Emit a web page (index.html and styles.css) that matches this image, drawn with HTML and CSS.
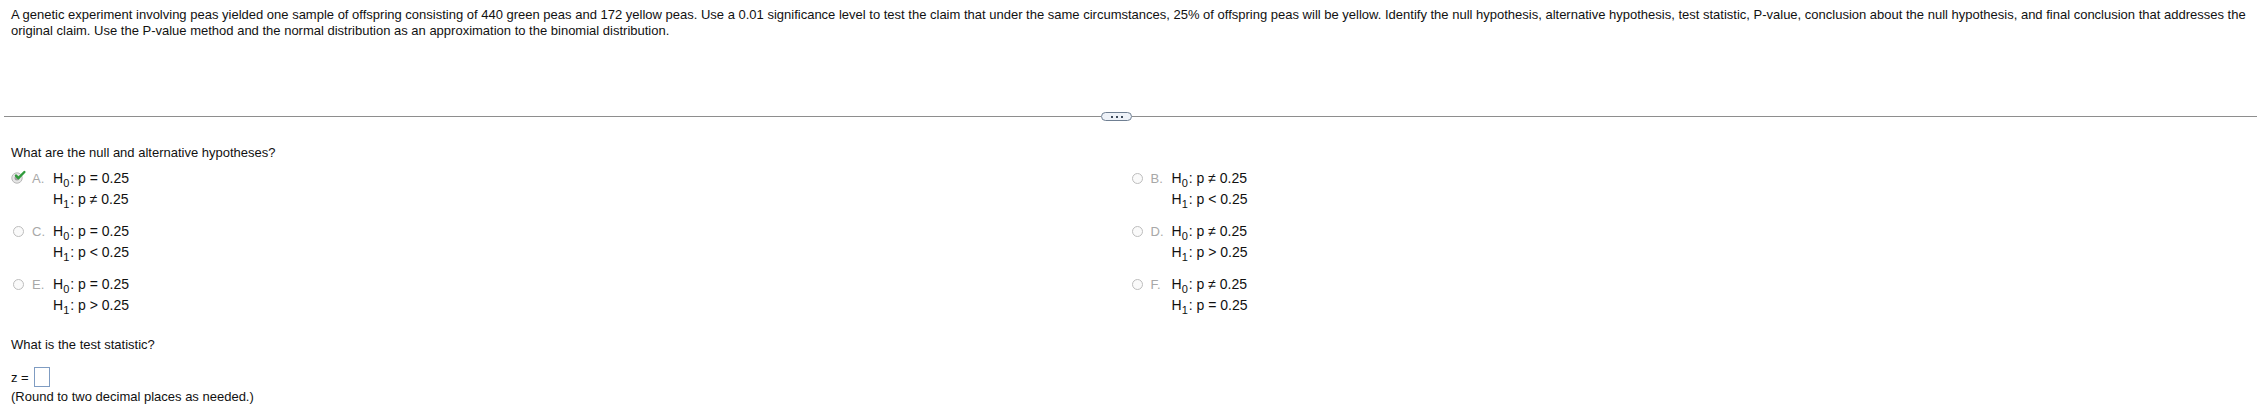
FILE: index.html
```html
<!DOCTYPE html>
<html>
<head>
<meta charset="utf-8">
<link rel="stylesheet" href="styles.css">
</head>
<body>
<div class="page">
  <p class="question">A genetic experiment involving peas yielded one sample of offspring consisting of 440 green peas and 172 yellow peas. Use a 0.01 significance level to test the claim that under the same circumstances, 25% of offspring peas will be yellow. Identify the null hypothesis, alternative hypothesis, test statistic, P-value, conclusion about the null hypothesis, and final conclusion that addresses the original claim. Use the P-value method and the normal distribution as an approximation to the binomial distribution.</p>

  <div class="divider">
    <span class="rule"></span>
    <span class="more"><i></i><i></i><i></i></span>
    <span class="rule"></span>
  </div>

  <p class="prompt">What are the null and alternative hypotheses?</p>

  <div class="options">
    <div class="option">
      <span class="radio checked">
        <svg width="17" height="14" viewBox="0 0 17 14">
          <circle cx="6" cy="8" r="5.2" fill="#e6e6e6" stroke="#b8b8b8" stroke-width="1"/>
          <circle cx="6" cy="8" r="2.5" fill="#a0a0a0"/>
          <path d="M5 5.6 L7.4 8.2 L13.4 2" fill="none" stroke="#2f9b3b" stroke-width="2.4" stroke-linecap="round" stroke-linejoin="round"/>
        </svg>
      </span>
      <span class="letter">A.</span>
      <div class="hyp">
        <div>H<sub>0</sub>: p = 0.25</div>
        <div>H<sub>1</sub>: p ≠ 0.25</div>
      </div>
    </div>
    <div class="option">
      <span class="radio"></span>
      <span class="letter">B.</span>
      <div class="hyp">
        <div>H<sub>0</sub>: p ≠ 0.25</div>
        <div>H<sub>1</sub>: p &lt; 0.25</div>
      </div>
    </div>
    <div class="option">
      <span class="radio"></span>
      <span class="letter">C.</span>
      <div class="hyp">
        <div>H<sub>0</sub>: p = 0.25</div>
        <div>H<sub>1</sub>: p &lt; 0.25</div>
      </div>
    </div>
    <div class="option">
      <span class="radio"></span>
      <span class="letter">D.</span>
      <div class="hyp">
        <div>H<sub>0</sub>: p ≠ 0.25</div>
        <div>H<sub>1</sub>: p &gt; 0.25</div>
      </div>
    </div>
    <div class="option">
      <span class="radio"></span>
      <span class="letter">E.</span>
      <div class="hyp">
        <div>H<sub>0</sub>: p = 0.25</div>
        <div>H<sub>1</sub>: p &gt; 0.25</div>
      </div>
    </div>
    <div class="option">
      <span class="radio"></span>
      <span class="letter">F.</span>
      <div class="hyp">
        <div>H<sub>0</sub>: p ≠ 0.25</div>
        <div>H<sub>1</sub>: p = 0.25</div>
      </div>
    </div>
  </div>

  <p class="prompt prompt-2">What is the test statistic?</p>

  <div class="answer">
    <span class="zlabel">z =</span>
    <span class="box"></span>
  </div>
  <p class="note">(Round to two decimal places as needed.)</p>
</div>
</body>
</html>
```

FILE: styles.css
```css
html, body {
  margin: 0;
  padding: 0;
  background: #ffffff;
}

body {
  font-family: "Liberation Sans", Arial, sans-serif;
  font-size: 13px;
  color: #111111;
}

.page {
  width: 2259px;
  height: 405px;
  overflow: hidden;
}

.question {
  margin: 0;
  padding: 7px 11px 0 11px;
  line-height: 16px;
}

.divider {
  display: flex;
  align-items: center;
  height: 9px;
  margin: 73px 2px 0 4px;
}

.rule {
  flex: 1;
  height: 0;
  border-top: 1px solid #8e8e8e;
}

.rule:first-child {
  flex: 0 0 1097px;
}

.more {
  display: flex;
  align-items: center;
  justify-content: center;
  gap: 3px;
  width: 29px;
  height: 7px;
  border: 1px solid #6f7f92;
  border-radius: 5px;
  background: #eef2f8;
}

.more i {
  display: block;
  width: 2px;
  height: 2px;
  background: #3d4a5a;
}

.prompt {
  margin: 24px 0 0 11px;
  line-height: 16px;
}

.options {
  display: grid;
  grid-template-columns: 1fr 1fr;
  row-gap: 11px;
  margin: 7px 11px 0 11px;
}

.option {
  display: flex;
  align-items: flex-start;
  line-height: 21px;
}

.radio {
  box-sizing: border-box;
  width: 11px;
  height: 11px;
  margin: 5px 8px 0 2px;
  border: 1px solid #bdbdbd;
  border-radius: 50%;
  background: #fafafa;
  flex: 0 0 auto;
}

.radio.checked {
  position: relative;
  border: none;
  background: none;
}

.radio.checked svg {
  position: absolute;
  left: -2px;
  top: -3px;
}

.letter {
  width: 21px;
  color: #a8a8a8;
  flex: 0 0 auto;
}

.hyp {
  font-size: 14px;
}

.hyp div {
  height: 21px;
  white-space: nowrap;
}

.hyp sub {
  font-size: 11px;
  line-height: 0;
  vertical-align: -4px;
  margin: 0 1px 0 0;
}

.prompt-2 {
  margin-top: 21px;
}

.answer {
  display: flex;
  align-items: center;
  gap: 5px;
  margin: 14px 0 0 11px;
  height: 20px;
}

.zlabel {
  line-height: 16px;
  padding-top: 2px;
}

.box {
  box-sizing: border-box;
  width: 16px;
  height: 20px;
  border: 1px solid #7f9cc2;
  background: #ffffff;
}

.note {
  margin: 2px 0 0 11px;
  line-height: 16px;
}
```
